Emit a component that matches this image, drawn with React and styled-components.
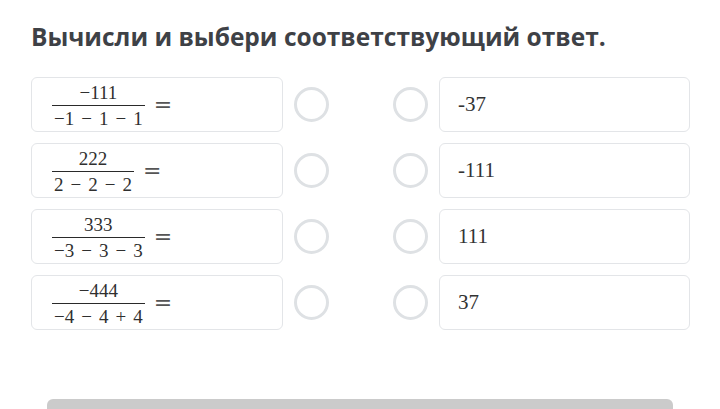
import styled, { createGlobalStyle } from 'styled-components'

const GlobalStyle = createGlobalStyle`
body {
  margin: 0;
  background: #ffffff;
  font-family: "Open Sans", "Liberation Sans", sans-serif;
}
`

const Page = styled.div`
width: 720px;
height: 409px;
overflow: hidden;
`

const Content = styled.div`
padding: 0 30px 0 31px;
`

const Title = styled.h1`
margin: 0;
padding-top: 20px;
height: 77px;
box-sizing: border-box;
font-size: 24.5px;
font-weight: 700;
line-height: 34px;
color: #3e4146;
`

const Board = styled.div`
display: flex;
gap: 64px;
`

const Column = styled.div`
display: flex;
flex-direction: column;
gap: 11px;
`

const Pair = styled.div`
display: flex;
align-items: center;
gap: 11px;
`

const Card = styled.div`
width: ${p => (p.$right ? 251 : 252)}px;
height: 55px;
box-sizing: border-box;
border: 1px solid #e3e5e8;
border-radius: 6px;
display: flex;
align-items: center;
padding-left: ${p => (p.$right ? 18 : 22)}px;
background: #fff;
`

const Radio = styled.div`
width: 35px;
height: 35px;
box-sizing: border-box;
border: 3px solid #dee1e4;
border-radius: 50%;
flex-shrink: 0;
`

const MathLine = styled.div`
display: flex;
align-items: center;
font-family: "Liberation Serif", "Times New Roman", serif;
color: #2f2f2f;
`

const Frac = styled.div`
display: inline-flex;
flex-direction: column;
align-items: center;
font-size: 19px;
line-height: 1;
margin-top: 2px;
`

const Num = styled.span`
padding-bottom: 3px;
`

const Bar = styled.span`
align-self: stretch;
height: 1px;
background: #2a2a2a;
margin: 0 -2px;
`

const Den = styled.span`
padding-top: 3px;
`

const Op = styled.span`
margin: 0 7px;
`

const Equals = styled.span`
font-family: "DejaVu Serif", serif;
font-size: 22px;
line-height: 1;
margin-left: 11px;
color: #555;
`

const Answer = styled.span`
font-family: "Liberation Serif", "Times New Roman", serif;
font-size: 21px;
color: #333;
`

const Footer = styled.div`
margin: 69px 47px 0;
height: 24px;
background: #cbcbcb;
border-radius: 6px 6px 0 0;
`

const fractions = [
  { num: '\u2212111', den: ['\u22121', '\u2212', '1', '\u2212', '1'] },
  { num: '222', den: ['2', '\u2212', '2', '\u2212', '2'] },
  { num: '333', den: ['\u22123', '\u2212', '3', '\u2212', '3'] },
  { num: '\u2212444', den: ['\u22124', '\u2212', '4', '+', '4'] },
]

const answers = ['-37', '-111', '111', '37']

export default function App() {
  return (
    <Page>
      <GlobalStyle />
      <Content>
        <Title>Вычисли и выбери соответствующий ответ.</Title>
        <Board>
          <Column>
            {fractions.map((f, i) => (
              <Pair key={i}>
                <Card>
                  <MathLine>
                    <Frac>
                      <Num>{f.num}</Num>
                      <Bar />
                      <Den>
                        {f.den.map((t, j) => (j % 2 ? <Op key={j}>{t}</Op> : <span key={j}>{t}</span>))}
                      </Den>
                    </Frac>
                    <Equals>=</Equals>
                  </MathLine>
                </Card>
                <Radio />
              </Pair>
            ))}
          </Column>
          <Column>
            {answers.map(a => (
              <Pair key={a}>
                <Radio />
                <Card $right>
                  <Answer>{a}</Answer>
                </Card>
              </Pair>
            ))}
          </Column>
        </Board>
      </Content>
      <Footer />
    </Page>
  )
}
